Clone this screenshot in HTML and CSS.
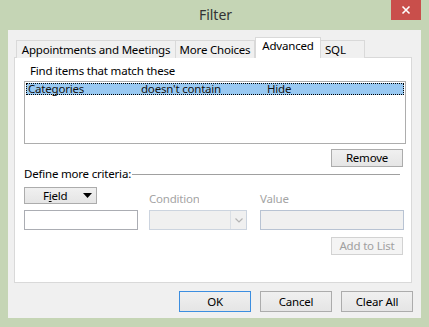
FILE: index.html
```html
<!DOCTYPE html>
<html>
<head>
<meta charset="utf-8">
<link rel="stylesheet" href="styles.css">
</head>
<body>
<div class="window">
  <div class="titlebar">
    <div></div>
    <div class="title">Filter</div>
    <div class="close">
      <svg width="10" height="10" viewBox="0 0 10 10"><path d="M1.5 1.5 L8.5 8.5 M8.5 1.5 L1.5 8.5" stroke="#fff" stroke-width="1.6" fill="none"/></svg>
    </div>
  </div>
  <div class="client">
    <div class="tabs">
      <div class="tab t1">Appointments and Meetings</div>
      <div class="tab t2">More Choices</div>
      <div class="tab t3 selected">Advanced</div>
      <div class="tab t4">SQL</div>
    </div>
    <div class="panel">
      <div class="find-label">Find items that match these</div>
      <div class="list">
        <div class="row">
          <span class="c1">Categories</span><span class="c2">doesn't contain</span><span class="c3">Hide</span>
        </div>
      </div>
      <div class="right-row"><button class="btn remove">Remove</button></div>
      <div class="define"><span>Define more criteria:</span><div class="rule"></div></div>
      <div class="criteria">
        <button class="btn field">F<u>i</u>eld<svg width="9" height="5" viewBox="0 0 9 5"><path d="M0 0 H9 L4.5 5 Z" fill="#000"/></svg></button>
        <div class="lbl cond">Condition</div>
        <div class="lbl val">Value</div>
        <div class="input"></div>
        <div class="combo"><div class="combo-arrow"><svg width="8" height="5" viewBox="0 0 8 5"><path d="M0.5 0.5 L4 4 L7.5 0.5" stroke="#b4b4b4" stroke-width="1.2" fill="none"/></svg></div></div>
        <div class="input disabled"></div>
      </div>
      <div class="right-row add-row"><button class="btn disabled-btn">Add to List</button></div>
    </div>
    <div class="footer">
      <button class="btn big default">OK</button>
      <button class="btn big">Cancel</button>
      <button class="btn big">Clear All</button>
    </div>
  </div>
</div>
</body>
</html>
```
FILE: styles.css
```css
* { box-sizing: border-box; }
html, body { margin: 0; padding: 0; }
body {
  width: 429px;
  height: 327px;
  background: #c5d5b5;
  font-family: "Noto Sans", "Open Sans", sans-serif;
  font-size: 11.5px;
  letter-spacing: -0.2px;
  color: #000;
  overflow: hidden;
}
.window { width: 429px; height: 327px; }
.titlebar {
  height: 30px;
  display: grid;
  grid-template-columns: 1fr auto 1fr;
  align-items: start;
}
.title {
  font-size: 14px;
  letter-spacing: 0;
  color: #333;
  line-height: 30px;
  padding-left: 2px;
}
.close {
  justify-self: end;
  width: 30px;
  height: 20px;
  margin-right: 8px;
  background: #c94f4b;
  display: flex;
  align-items: center;
  justify-content: center;
}
.client {
  margin: 0 8px;
  height: 288px;
  background: #f0f0f0;
  padding: 7px 9px 0 6px;
}
.tabs {
  display: flex;
  align-items: flex-end;
  height: 21px;
  margin-left: 2px;
  margin-bottom: -1px;
  position: relative;
  z-index: 1;
}
.tab {
  height: 18px;
  border: 1px solid #d9d9d9;
  border-bottom: none;
  background: #f0f0f0;
  display: flex;
  align-items: center;
  justify-content: center;
  white-space: nowrap;
  line-height: 14px;
  padding-top: 1px;
}
.tab + .tab { border-left: none; }
.t1 { width: 160px; }
.t2 { width: 79px; }
.t3 { width: 66px; }
.t4 { width: 44px; justify-content: flex-start; padding-left: 4px; }
.tab.selected {
  height: 21px;
  background: #fff;
  border-left: 1px solid #d9d9d9;
  border-right: 1px solid #d9d9d9;
  padding-top: 0;
  padding-bottom: 4px;
}
.tab.selected + .tab { border-left: none; }
.panel {
  height: 226px;
  background: #fff;
  border: 1px solid #d9d9d9;
  padding: 0 5px 0 9px;
}
.find-label {
  margin: 6px 0 0 6px;
  height: 14px;
  line-height: 14px;
}
.list {
  margin-top: 3px;
  height: 63px;
  border: 1px solid #adadad;
  padding: 1px;
}
.row {
  height: 12px;
  background: #99c9f2;
  outline: 1px dotted #000;
  outline-offset: -1px;
  display: flex;
  align-items: center;
  line-height: 12px;
  padding-left: 2px;
  color: #111;
}
.c1 { width: 113px; }
.c2 { width: 126px; }
.right-row {
  display: flex;
  justify-content: flex-end;
  padding-right: 3px;
  margin-top: 5px;
}
.btn {
  font-family: inherit;
  font-size: 11.5px;
  letter-spacing: -0.2px;
  color: #000;
  height: 18px;
  width: 72px;
  padding: 0;
  border: 1px solid #acacac;
  background: linear-gradient(#f0f0f0, #e5e5e5);
  display: flex;
  align-items: center;
  justify-content: center;
  line-height: 14px;
}
.define {
  display: flex;
  align-items: center;
  height: 14px;
  line-height: 14px;
  padding-right: 6px;
}
.rule {
  flex: 1;
  height: 1px;
  background: #a0a0a0;
  margin-left: 1px;
}
.criteria {
  margin-top: 6px;
  display: grid;
  grid-template-columns: 114px 98px 146px;
  column-gap: 11px;
  grid-template-rows: 19px 20px;
  row-gap: 4px;
}
.field {
  width: 73px;
  height: 17px;
  justify-content: flex-start;
  padding-left: 18px;
}
.field svg { margin-left: 15px; }
.field u { text-decoration: underline; text-underline-offset: 1px; }
.lbl {
  align-self: end;
  line-height: 14px;
  height: 14px;
  color: #a4a4a4;
}
.cond { width: 50px; overflow: hidden; white-space: nowrap; }
.val { margin-left: 2px; }
.input {
  border: 1px solid #abadb3;
  background: #fff;
  height: 20px;
}
.input.disabled {
  margin-left: 2px;
  background: #f0f0f0;
  border: 1px solid #b8c3d3;
}
.combo {
  border: 1px solid #ccd4df;
  background: #f0f0f0;
  height: 20px;
  display: flex;
  justify-content: flex-end;
}
.combo-arrow {
  width: 16px;
  border-left: 1px solid #dadfe5;
  display: flex;
  align-items: center;
  justify-content: center;
}
.add-row { margin-top: 7px; }
.disabled-btn {
  color: #a0a0a0;
  background: #f4f4f4;
  border-color: #d2d2d2;
}
.footer {
  display: flex;
  justify-content: flex-end;
  gap: 9px;
  margin-top: 8px;
  margin-right: -1px;
}
.btn.big { height: 21px; }
.btn.default { border-color: #3c8ee0; }
```
